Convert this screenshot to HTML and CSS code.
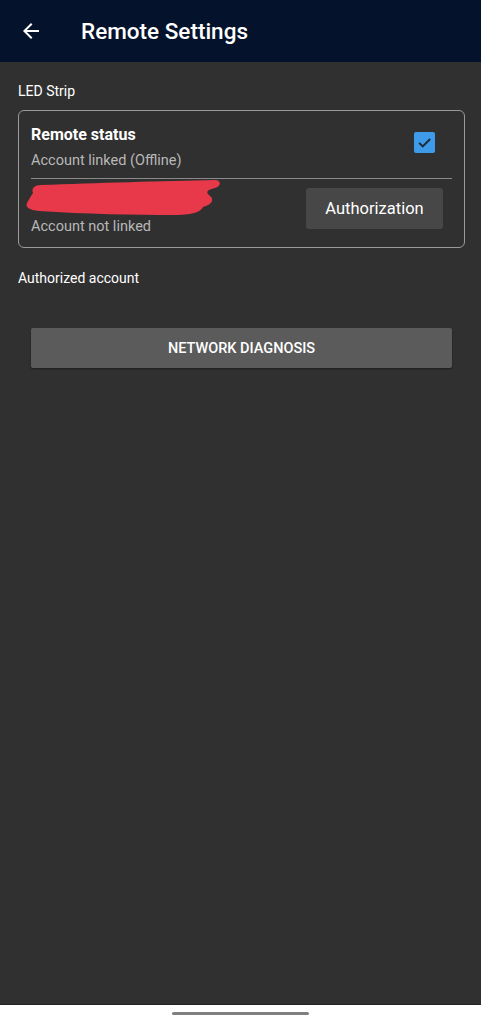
FILE: index.html
```html
<!DOCTYPE html>
<html lang="en">
<head>
    <meta charset="UTF-8">
    <meta name="viewport" content="width=device-width, initial-scale=1.0">
    <title>Remote Settings</title>
    <link rel="stylesheet" href="styles.css">
</head>
<body>

<div class="screen">
    <div class="topbar">
        <svg class="back" width="24" height="24" viewBox="0 0 24 24">
            <path d="M20 11H7.83l5.59-5.59L12 4l-8 8 8 8 1.41-1.41L7.83 13H20v-2z" fill="#ffffff"/>
        </svg>
        <h1>Remote Settings</h1>
    </div>

    <div class="content">
        <div class="section-label">LED Strip</div>

        <div class="card">
            <div class="status-row">
                <div>
                    <div class="status-title">Remote status</div>
                    <div class="status-sub">Account linked (Offline)</div>
                </div>
                <div class="checkbox">
                    <svg width="17" height="17" viewBox="0 0 24 24">
                        <path d="M4.5 12.5L9.5 17.5L20 7" fill="none" stroke="#1e2a36" stroke-width="2.8"/>
                    </svg>
                </div>
            </div>
            <div class="divider"></div>
            <div class="account-row">
                <div class="account-info">
                    <svg class="scribble" width="200" height="38" viewBox="0 0 200 38">
                        <path d="M16 5 C70 3 140 1 190 0 C196 0 197 6 190 8 C182 10 180 12 185 16 C190 20 186 25 178 27 C176 31 170 35 150 35 C110 35 60 34 14 31 C4 30 0 27 2 23 C4 19 6 16 8 13 C6 8 10 5 16 5 Z"
                              fill="#e8394b"/>
                    </svg>
                    <div class="status-sub">Account not linked</div>
                </div>
                <button class="auth-btn">Authorization</button>
            </div>
        </div>

        <div class="section-label auth-label">Authorized account</div>

        <button class="diag-btn">NETWORK DIAGNOSIS</button>
    </div>

    <div class="navbar">
        <div class="handle"></div>
    </div>
</div>

</body>
</html>
```

FILE: styles.css
```css
body {
    margin: 0;
    font-family: Roboto, "Noto Sans", Arial, sans-serif;
    background-color: #303030;
}
.screen {
    height: 1024px;
    display: flex;
    flex-direction: column;
}
.topbar {
    height: 62px;
    background-color: #04122b;
    display: flex;
    align-items: center;
    padding-left: 19px;
    flex-shrink: 0;
}
.topbar h1 {
    margin: 0 0 0 38px;
    color: #ffffff;
    font-size: 22.5px;
    font-weight: 500;
}
.content {
    flex: 1;
    padding: 0 16px 0 18px;
}
.section-label {
    color: #ffffff;
    font-size: 14px;
    margin-top: 21px;
    line-height: 16px;
}
.card {
    margin-top: 11px;
    border: 1px solid #9a9a9a;
    border-radius: 6px;
    padding: 14px 12px 11px 12px;
}
.status-row {
    display: flex;
    justify-content: space-between;
    align-items: flex-start;
}
.status-title {
    color: #ffffff;
    font-size: 16px;
    font-weight: 700;
    line-height: 20px;
}
.status-sub {
    color: #b8b8b8;
    font-size: 14.5px;
    line-height: 18px;
    margin-top: 7px;
}
.checkbox {
    width: 21px;
    height: 21px;
    border-radius: 2px;
    background-color: #3d9be9;
    display: flex;
    align-items: center;
    justify-content: center;
    margin: 7px 17px 0 0;
}
.divider {
    height: 1px;
    background-color: #8a8a8a;
    margin-top: 8px;
}
.account-row {
    display: flex;
    justify-content: space-between;
    align-items: flex-start;
}
.account-info {
    display: flex;
    flex-direction: column;
}
.scribble {
    display: block;
    margin: 1px 0 0 -6px;
    height: 38px;
}
.account-info .status-sub {
    margin-top: 0;
}
.auth-btn {
    margin: 9px 9px 0 0;
    width: 137px;
    height: 41px;
    background-color: #474747;
    color: #ffffff;
    font-family: inherit;
    font-size: 16.5px;
    font-weight: 400;
    border: none;
    border-radius: 3px;
}
.auth-label {
    margin-top: 22px;
}
.diag-btn {
    display: block;
    margin: 42px 13px 0 13px;
    width: calc(100% - 26px);
    height: 40px;
    background-color: #5b5b5b;
    color: #ffffff;
    font-family: inherit;
    font-size: 14.5px;
    font-weight: 500;
    border: none;
    border-radius: 2px;
    box-shadow: 0 1px 2px rgba(0, 0, 0, 0.4);
}
.navbar {
    height: 19px;
    background-color: #ffffff;
    border-top: 1px solid #222;
    display: flex;
    justify-content: center;
    flex-shrink: 0;
}
.handle {
    width: 137px;
    height: 3px;
    background-color: #808080;
    border-radius: 2px;
    margin-top: 7px;
}
```
